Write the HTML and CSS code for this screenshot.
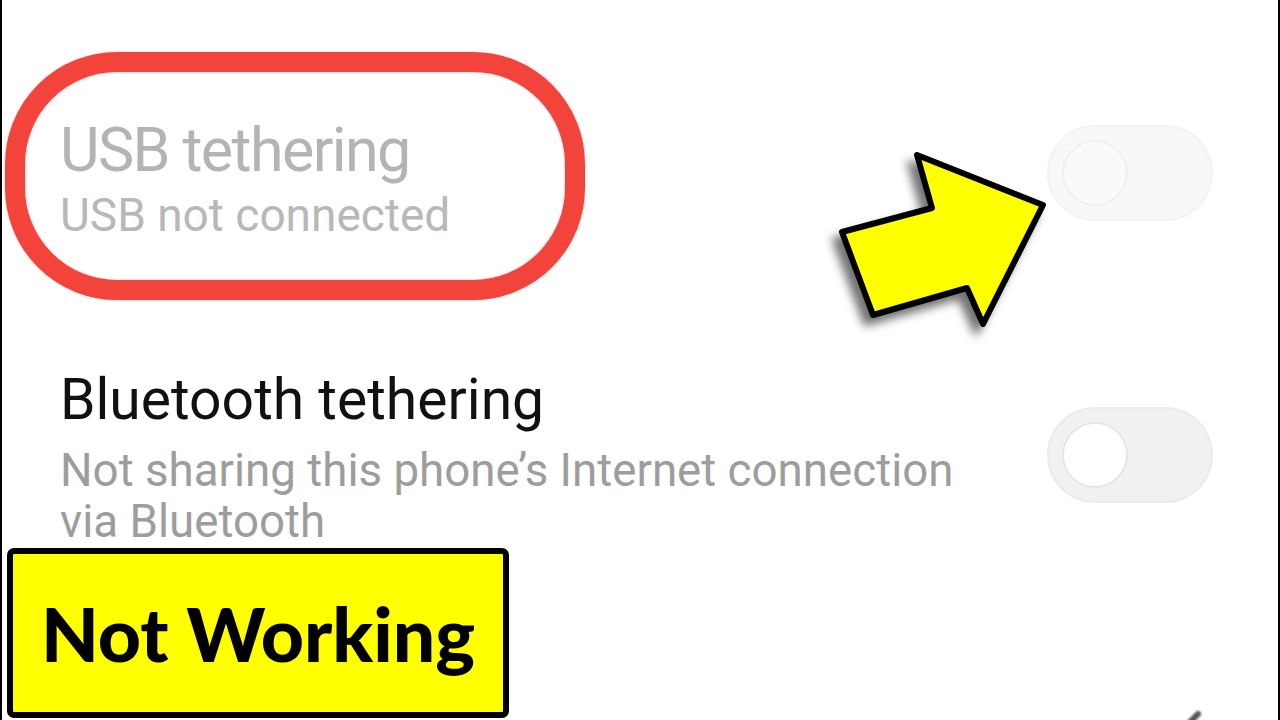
FILE: index.html
```html
<!DOCTYPE html>
<html lang="en">
<head>
    <meta charset="UTF-8">
    <meta name="viewport" content="width=device-width, initial-scale=1.0">
    <title>USB tethering not working</title>
    <link rel="stylesheet" href="styles.css">
</head>
<body>
    <div class="screen">
        <div class="settings-list">
            <div class="setting-row disabled">
                <div class="setting-text">
                    <div class="setting-title">USB tethering</div>
                    <div class="setting-summary">USB not connected</div>
                </div>
                <div class="switch faded"><span class="knob"></span></div>
            </div>

            <div class="setting-row second">
                <div class="setting-text">
                    <div class="setting-title">Bluetooth tethering</div>
                    <div class="setting-summary">Not sharing this phone’s Internet connection<br>via Bluetooth</div>
                </div>
                <div class="switch"><span class="knob"></span></div>
            </div>
        </div>

        <!-- highlight ring around the usb entry -->
        <div class="highlight-ring"></div>

        <!-- pointer arrow at the switch -->
        <svg class="pointer-arrow" width="230" height="200" viewBox="820 140 230 200">
            <polygon points="873,315 842,232 932,208 917,155 1043,205 983,324 967,288"
                     fill="#ffff00" stroke="#000" stroke-width="6" stroke-linejoin="round"/>
        </svg>

        <div class="banner">Not Working</div>

        <svg class="chevron-peek" width="40" height="20" viewBox="0 0 40 20">
            <path d="M12 18 L20 10" stroke="#555" stroke-width="6" stroke-linecap="round"/>
        </svg>
    </div>
</body>
</html>
```

FILE: styles.css
```css
* {
    margin: 0;
    padding: 0;
    box-sizing: border-box;
}

body {
    background: #fff;
    font-family: 'Roboto', 'Liberation Sans', sans-serif;
    overflow: hidden;
}

.screen {
    position: relative;
    width: 1280px;
    height: 720px;
    background: #fff;
    border-left: 2px solid #000;
    border-right: 2px solid #000;
}

.settings-list {
    padding: 115px 65px 0 58px;
}

.setting-row {
    display: flex;
    justify-content: space-between;
    align-items: center;
}

.setting-row.second {
    margin-top: 123px;
}

.setting-title {
    font-size: 61px;
    line-height: 70px;
    letter-spacing: -1.6px;
    color: #b4b4b4;
}

.setting-summary {
    font-size: 46px;
    line-height: 60px;
    color: #b8b8b8;
}

.second .setting-title {
    font-size: 57px;
    line-height: 64px;
    letter-spacing: 0;
    color: #111;
}

.second .setting-summary {
    font-size: 45.7px;
    line-height: 51px;
    margin-top: 13px;
    color: #9d9d9d;
}

.switch {
    width: 166px;
    height: 96px;
    border-radius: 48px;
    background: #f1f1f1;
    border: 2px solid #ebebeb;
    display: flex;
    align-items: center;
    padding-left: 13px;
    flex-shrink: 0;
}

.setting-row.disabled .switch {
    margin-top: -14px;
}

.setting-row.second .switch {
    margin-top: -6px;
}

.knob {
    width: 66px;
    height: 66px;
    border-radius: 50%;
    background: #fff;
    border: 2px solid #e6e6e6;
}

.switch.faded {
    background: #f8f8f8;
    border-color: #f3f3f3;
}

.switch.faded .knob {
    background: #fafafa;
    border-color: #efefef;
}

.highlight-ring {
    position: absolute;
    left: 3px;
    top: 52px;
    width: 580px;
    height: 248px;
    border: 20px solid #f2443a;
    border-radius: 112px;
    box-shadow: inset 0 0 3px rgba(0,0,0,0.25), 0 0 3px rgba(0,0,0,0.2);
}

.pointer-arrow {
    position: absolute;
    left: 818px;
    top: 140px;
    filter: drop-shadow(-7px 8px 5px rgba(0,0,0,0.55));
    overflow: visible;
}

.banner {
    position: absolute;
    left: 5px;
    top: 548px;
    width: 502px;
    height: 170px;
    background: #ffff00;
    border: 6px solid #000;
    border-radius: 7px;
    display: flex;
    align-items: center;
    justify-content: center;
    font-family: 'Lato', 'Open Sans', sans-serif;
    font-weight: 900;
    font-size: 75px;
    color: #000;
    padding-top: 0;
}

.chevron-peek {
    position: absolute;
    left: 1176px;
    top: 704px;
    filter: blur(1px);
}
```
